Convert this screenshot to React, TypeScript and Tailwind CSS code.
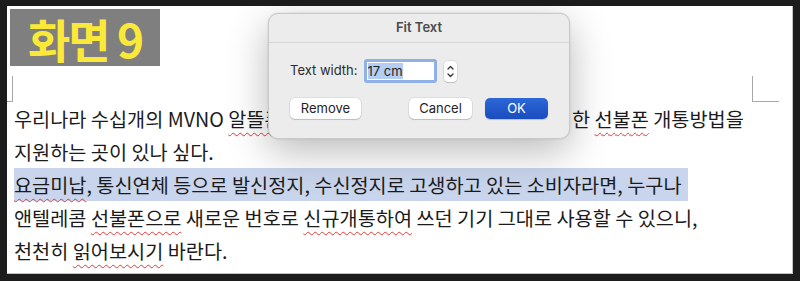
import React from 'react';

const squiggle = 'underline decoration-wavy decoration-[#e53935] decoration-1 underline-offset-[5px]';

const Stepper: React.FC = () => (
  <div className="ml-[7px] flex h-[21px] w-[13px] flex-col items-center justify-center rounded-[4px] bg-white shadow-[0_0_0_0.5px_rgba(0,0,0,0.15),0_1px_1px_rgba(0,0,0,0.12)]">
    <svg width="9" height="17" viewBox="0 0 9 17" fill="none" stroke="#333" strokeWidth="1.3" strokeLinecap="round" strokeLinejoin="round">
      <path d="M2 6 L4.5 3.5 L7 6" />
      <path d="M2 11 L4.5 13.5 L7 11" />
    </svg>
  </div>
);

const FitTextDialog: React.FC = () => (
  <div
    className="absolute left-[261px] top-[7px] w-[302px] h-[126px] rounded-[10px] border border-[#c9c9c9] bg-[#ececec] shadow-[0_12px_40px_rgba(0,0,0,0.28),0_0_2px_rgba(0,0,0,0.15)]"
    style={{ fontFamily: 'Inter, "Liberation Sans", sans-serif' }}
  >
    <div className="flex h-[29px] items-center justify-center border-b border-[#d6d6d6] text-[13px] font-semibold text-[#4b4b4b]">
      Fit Text
    </div>
    <div className="flex items-center pl-[21px] pt-[16px]">
      <span className="text-[13px] text-[#2b2b2b]">Text width:</span>
      <div className="ml-[6px] flex h-[24px] w-[73px] items-center rounded-[3px] border-[3px] border-[#8fb1e6] bg-white pl-[1px]">
        <span className="bg-[#b4cdf2] text-[13px] leading-[16px] text-[#1e1e1e]">17 cm</span>
      </div>
      <Stepper />
    </div>
    <div className="flex items-center px-[21px] pt-[15px] text-[13px]">
      <button className="h-[21px] w-[71px] rounded-[5px] bg-white text-[#242424] shadow-[0_0_0_0.5px_rgba(0,0,0,0.12),0_1px_1px_rgba(0,0,0,0.15)]">
        Remove
      </button>
      <button className="ml-auto h-[21px] w-[63px] rounded-[5px] bg-white text-[#242424] shadow-[0_0_0_0.5px_rgba(0,0,0,0.12),0_1px_1px_rgba(0,0,0,0.15)]">
        Cancel
      </button>
      <button className="ml-[13px] h-[21px] w-[63px] rounded-[5px] bg-gradient-to-b from-[#2d67d8] to-[#1a4cbd] text-white shadow-[0_1px_1px_rgba(0,0,0,0.2)]">
        OK
      </button>
    </div>
  </div>
);

export default function App() {
  return (
    <div className="h-[281px] w-[800px] overflow-hidden bg-[#1c1c1c] pb-[7px] pl-[7px] pr-[7px] pt-[6px]">
      <div
        className="relative h-full overflow-hidden border-b border-r border-[#c4c4c4] bg-white"
        style={{ fontFamily: '"Noto Sans CJK KR", "Noto Sans", sans-serif' }}
      >
        {/* title tag */}
        <div className="ml-[3px] mt-[3px] flex h-[57px] w-[150px] items-center justify-center bg-[#7f7f7f]">
          <span className="text-[46px] font-bold leading-none tracking-[-2px] text-[#fbe93a]">화면 9</span>
        </div>

        {/* margin corner marks */}
        <div className="absolute left-0 top-[70px] h-[26px] w-[6px] border-b-[1.5px] border-r-[1.5px] border-[#a8a8a8]" />
        <div className="absolute left-[745px] top-[70px] h-[26px] w-[27px] border-b-[1.5px] border-l-[1.5px] border-[#a8a8a8]" />

        {/* body text */}
        <div className="mt-[36px] pl-[7px] text-[19.7px] leading-[33px] text-[#1b1b1b] whitespace-nowrap">
          <div>
            우리나라 수십개의 MVNO <span className={squiggle}>알뜰폰</span> 업체들 중에서도 신용불량자들을 위한{' '}
            <span className={squiggle}>선불폰</span> 개통방법을
          </div>
          <div>지원하는 곳이 있나 싶다.</div>
          <div>
            <span className="inline-block bg-[#c8d5ec] pr-[6px]">
              <span className={squiggle}>요금미납</span>, 통신연체 등으로 발신정지, 수신정지로 고생하고 있는 소비자라면, 누구나
            </span>
          </div>
          <div>
            앤텔레콤 <span className={squiggle}>선불폰으로</span> 새로운 번호로{' '}
            <span className={squiggle}>신규개통하여</span> 쓰던 기기 그대로 사용할 수 있으니,
          </div>
          <div>
            천천히 <span className={squiggle}>읽어보시기</span> 바란다.
          </div>
        </div>

        <FitTextDialog />
      </div>
    </div>
  );
}
